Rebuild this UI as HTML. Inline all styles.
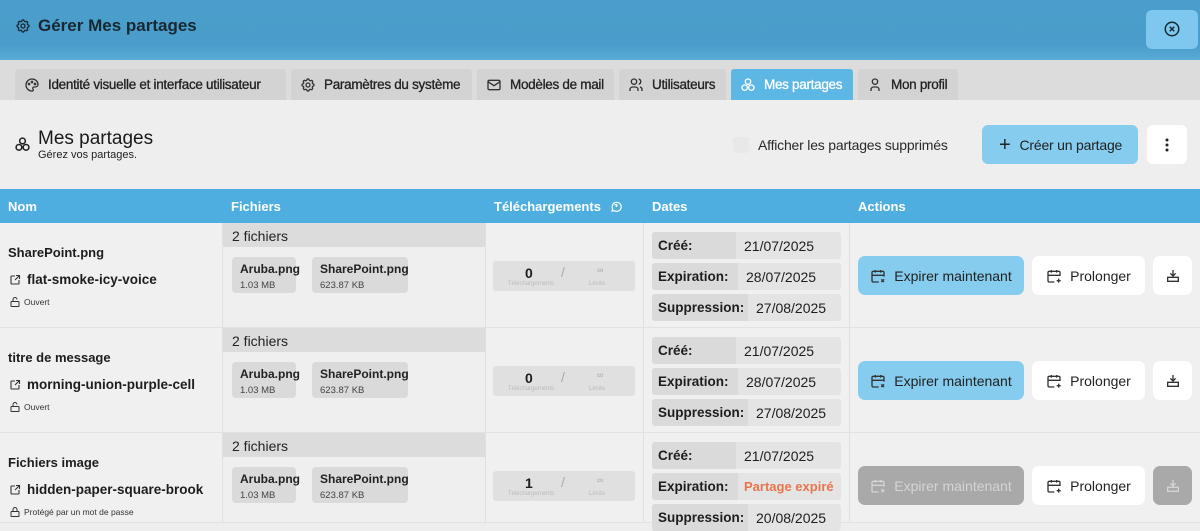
<!DOCTYPE html>
<html><head><meta charset="utf-8"><style>
*{box-sizing:border-box;margin:0;padding:0}
body{width:1200px;height:518px;overflow:hidden;background:#eee;font-family:"Liberation Sans",sans-serif;color:#1d1d1d;position:relative}
.a{position:absolute}
.hdr{left:0;top:0;width:1200px;height:60px;background:linear-gradient(180deg,#4b9ecb 0%,#4a9dca 75%,#5aaad6 100%)}
.tabs{left:0;top:60px;width:1200px;height:40px;background:#dcdcdc}
.tab{top:69px;height:31px;background:#d3d3d3;border-radius:3px 3px 0 0;font-size:13.5px;letter-spacing:-0.3px;color:#222;display:flex;align-items:center;padding-left:9px;gap:8px;white-space:nowrap;-webkit-text-stroke:0.3px #222}
.tab.on{background:#5db7e4;color:#fff;-webkit-text-stroke:0.3px #fff}
svg{display:block;flex-shrink:0}
.th{top:189px;height:34px;background:#4eaee0;width:1200px;left:0}
.th span{position:absolute;top:10px;color:#fff;font-weight:bold;font-size:13px}
.row{left:0;width:1200px;height:105px;background:#f0f0f0;border-bottom:1px solid #e2e2e2}
.vl{position:absolute;top:0;bottom:0;width:1px;background:#e0e0e0}
.fcol{position:absolute;left:223px;width:262px;top:0;bottom:0;background:#efefef}
.fh{position:absolute;left:0;top:0;width:262px;height:24px;background:#dcdcdc;font-size:14px;padding:5px 9px;color:#222}
.card{position:absolute;top:34px;height:36px;background:#dadada;border-radius:4px;padding:5px 8px;white-space:nowrap}
.card b{display:block;font-size:12px;color:#222}
.card i{display:block;font-style:normal;font-size:9.5px;color:#444;margin-top:4px}
.dl{position:absolute;left:493px;top:38px;width:142px;height:30px;background:#e0e0e0;border-radius:3px}
.dr{position:absolute;left:652px;width:189px;height:27px;border-radius:3px;background:#e4e4e4;display:flex;font-size:14px;align-items:center;white-space:nowrap}
.dr b{background:#dadada;height:100%;display:flex;align-items:center;padding-left:6px;border-radius:3px 0 0 3px;font-size:13.5px}
.dr span{padding-left:8px}
.btn{position:absolute;top:33px;height:39px;border-radius:7px;display:flex;align-items:center;justify-content:center;gap:8px;font-size:14px;color:#222}
</style></head><body>
<div class="a hdr"></div>
<svg class="a" style="left:15px;top:18px" width="16" height="16" viewBox="0 0 24 24" fill="none" stroke="#1a2a33" stroke-width="2"><path d="M10.3 4.3c.4-1.8 3-1.8 3.4 0a1.7 1.7 0 0 0 2.6 1.1c1.5-.9 3.3.8 2.4 2.4a1.7 1.7 0 0 0 1 2.5c1.8.4 1.8 3 0 3.4a1.7 1.7 0 0 0-1 2.6c.9 1.5-.9 3.3-2.4 2.4a1.7 1.7 0 0 0-2.6 1c-.4 1.8-3 1.8-3.4 0a1.7 1.7 0 0 0-2.6-1c-1.5.9-3.3-.9-2.4-2.4a1.7 1.7 0 0 0-1-2.6c-1.8-.4-1.8-3 0-3.4a1.7 1.7 0 0 0 1-2.6c-.9-1.5.9-3.3 2.4-2.4 1 .6 2.3.1 2.6-1z"/><circle cx="12" cy="12" r="3"/></svg>
<div class="a" style="left:38px;top:16px;font-size:17px;font-weight:bold;color:#182832">Gérer Mes partages</div>
<div class="a" style="left:1146px;top:10px;width:52px;height:39px;background:#7ec7ee;border-radius:6px"></div>
<svg class="a" style="left:1163px;top:20px" width="18" height="18" viewBox="0 0 24 24" fill="none" stroke="#1a2a33" stroke-width="2"><circle cx="12" cy="12" r="9"/><path d="M9 9l6 6M15 9l-6 6"/></svg>
<div class="a tabs"></div>
<div class="a tab" style="left:15px;width:271px"><svg width="16" height="16" viewBox="0 0 24 24" fill="none" stroke="#333" stroke-width="2"><path d="M12 21a9 9 0 0 1 0-18c5 0 9 3.6 9 8 0 2.5-2 4-4.5 4H15a2 2 0 0 0-1.5 3.3A1.6 1.6 0 0 1 12 21z"/><circle cx="7.5" cy="10.5" r="1"/><circle cx="12" cy="7.5" r="1"/><circle cx="16.5" cy="10.5" r="1"/></svg>Identité visuelle et interface utilisateur</div>
<div class="a tab" style="left:291px;width:181px"><svg width="16" height="16" viewBox="0 0 24 24" fill="none" stroke="#333" stroke-width="2"><circle cx="12" cy="12" r="3"/><path d="M10.3 4.3c.4-1.8 3-1.8 3.4 0a1.7 1.7 0 0 0 2.6 1.1c1.5-.9 3.3.8 2.4 2.4a1.7 1.7 0 0 0 1 2.5c1.8.4 1.8 3 0 3.4a1.7 1.7 0 0 0-1 2.6c.9 1.5-.9 3.3-2.4 2.4a1.7 1.7 0 0 0-2.6 1c-.4 1.8-3 1.8-3.4 0a1.7 1.7 0 0 0-2.6-1c-1.5.9-3.3-.9-2.4-2.4a1.7 1.7 0 0 0-1-2.6c-1.8-.4-1.8-3 0-3.4a1.7 1.7 0 0 0 1-2.6c-.9-1.5.9-3.3 2.4-2.4 1 .6 2.3.1 2.6-1z"/></svg>Paramètres du système</div>
<div class="a tab" style="left:477px;width:137px"><svg width="16" height="16" viewBox="0 0 24 24" fill="none" stroke="#333" stroke-width="2"><rect x="3" y="5" width="18" height="14" rx="2"/><path d="M3 7l9 6 9-6"/></svg>Modèles de mail</div>
<div class="a tab" style="left:619px;width:107px"><svg width="16" height="16" viewBox="0 0 24 24" fill="none" stroke="#333" stroke-width="2"><circle cx="9" cy="7" r="4"/><path d="M3 21v-2a4 4 0 0 1 4-4h4a4 4 0 0 1 4 4v2M16 3.1a4 4 0 0 1 0 7.8M21 21v-2a4 4 0 0 0-3-3.9"/></svg>Utilisateurs</div>
<div class="a tab on" style="left:731px;width:122px"><svg width="16" height="16" viewBox="0 0 24 24" fill="none" stroke="#fff" stroke-width="2"><circle cx="12" cy="7" r="4"/><circle cx="7" cy="16" r="4"/><circle cx="17" cy="16" r="4"/></svg>Mes partages</div>
<div class="a tab" style="left:858px;width:100px"><svg width="16" height="16" viewBox="0 0 24 24" fill="none" stroke="#333" stroke-width="2"><circle cx="12" cy="7" r="4"/><path d="M6 21v-2a4 4 0 0 1 4-4h4a4 4 0 0 1 4 4v2"/></svg>Mon profil</div>

<svg class="a" style="left:14px;top:136px" width="17" height="17" viewBox="0 0 24 24" fill="none" stroke="#222" stroke-width="2.2"><circle cx="12" cy="7" r="4"/><circle cx="7" cy="16" r="4"/><circle cx="17" cy="16" r="4"/></svg>
<div class="a" style="left:38px;top:128px;font-size:19px;color:#1a1a1a">Mes partages</div>
<div class="a" style="left:38px;top:149px;font-size:11px;color:#222">Gérez vos partages.</div>
<div class="a" style="left:733px;top:137px;width:16px;height:16px;background:#e8e8e8;border-radius:3px"></div>
<div class="a" style="left:758px;top:137px;font-size:14px;color:#2a2a2a;letter-spacing:-0.2px">Afficher les partages supprimés</div>
<div class="a" style="left:982px;top:125px;width:156px;height:39px;background:#86ccef;border-radius:6px;font-size:14px;color:#222;display:flex;align-items:center;padding-left:17px;gap:9px;white-space:nowrap;letter-spacing:-0.2px"><span style="font-size:20px;line-height:14px">+</span>Créer un partage</div>
<div class="a" style="left:1147px;top:125px;width:40px;height:39px;background:#fff;border-radius:6px;display:flex;align-items:center;justify-content:center"><svg width="4" height="14" viewBox="0 0 4 14"><circle cx="2" cy="2" r="1.5" fill="#222"/><circle cx="2" cy="7" r="1.5" fill="#222"/><circle cx="2" cy="12" r="1.5" fill="#222"/></svg></div>

<div class="a th"><span style="left:8px">Nom</span><span style="left:231px">Fichiers</span><span style="left:494px">Téléchargements</span>
<svg class="a" style="left:610px;top:12px" width="12" height="12" viewBox="0 0 24 24" fill="none" stroke="#fff" stroke-width="2.4"><path d="M4 20l1.5-4A9 9 0 1 1 9 19.5z"/><path d="M10 9a2 2 0 1 1 3 1.7c-.6.4-1 .8-1 1.3M12 16v.1"/></svg>
<span style="left:652px">Dates</span><span style="left:858px">Actions</span></div>

<div class="a row" style="top:223px">
<div class="vl" style="left:222px"></div><div class="vl" style="left:485px"></div><div class="vl" style="left:643px"></div><div class="vl" style="left:849px"></div>
<div class="a" style="left:8px;top:22px;font-size:13px;font-weight:bold">SharePoint.png</div>
<svg class="a" style="left:9px;top:51px" width="12" height="12" viewBox="0 0 24 24" fill="none" stroke="#333" stroke-width="2.2"><path d="M12 4H5a1 1 0 0 0-1 1v14a1 1 0 0 0 1 1h14a1 1 0 0 0 1-1v-7M14 3h7v7M21 3l-9 9"/></svg>
<div class="a" style="left:27px;top:49px;font-size:13.5px;font-weight:bold">flat-smoke-icy-voice</div>
<svg class="a" style="left:9px;top:73px" width="12" height="12" viewBox="0 0 24 24" fill="none" stroke="#333" stroke-width="2"><rect x="4" y="11" width="16" height="10" rx="1"/><path d="M8 11V7a4 4 0 0 1 8 0"/></svg>
<div class="a" style="left:24px;top:74px;font-size:8.5px;color:#333">Ouvert</div>
<div class="fcol"><div class="fh">2 fichiers</div><div class="card" style="left:9px;width:64px"><b>Aruba.png</b><i>1.03 MB</i></div><div class="card" style="left:89px;width:96px"><b>SharePoint.png</b><i>623.87 KB</i></div></div>
<div class="dl"><div class="a" style="left:32px;top:4px;font-size:14px;font-weight:bold">0</div><div class="a" style="left:68px;top:3px;font-size:14px;color:#aaa">/</div><div class="a" style="left:104px;top:4px;font-size:9px;color:#aaa">∞</div><div class="a" style="left:-2px;width:80px;text-align:center;top:20px;font-size:6px;color:#bbb">Téléchargements</div><div class="a" style="left:96px;top:20px;font-size:6px;color:#bbb">Limite</div></div>
<div class="dr" style="top:9px"><b style="width:84px">Créé:</b><span>21/07/2025</span></div>
<div class="dr" style="top:40px"><b style="width:86px">Expiration:</b><span>28/07/2025</span></div>
<div class="dr" style="top:71px"><b style="width:96px">Suppression:</b><span>27/08/2025</span></div>
<div class="btn" style="left:858px;width:166px;background:#86ccef"><svg width="16" height="16" viewBox="0 0 24 24" fill="none" stroke="#333" stroke-width="2"><path d="M13 21H5a2 2 0 0 1-2-2V7a2 2 0 0 1 2-2h14a2 2 0 0 1 2 2v6M16 3v4M8 3v4M3 11h18M17 17l4 4M21 17l-4 4"/></svg>Expirer maintenant</div>
<div class="btn" style="left:1032px;width:113px;background:#fff"><svg width="16" height="16" viewBox="0 0 24 24" fill="none" stroke="#333" stroke-width="2"><path d="M12.5 21H5a2 2 0 0 1-2-2V7a2 2 0 0 1 2-2h14a2 2 0 0 1 2 2v5M16 3v4M8 3v4M3 11h18M16 19h6M19 16v6"/></svg>Prolonger</div>
<div class="btn" style="left:1153px;width:39px;background:#fff"><svg width="16" height="16" viewBox="0 0 24 24" fill="none" stroke="#333" stroke-width="2"><path d="M12 3v9M8 8l4 4 4-4M4 14h16v6H4zM8 17h.01M12 17h.01"/></svg></div>
</div>

<div class="a row" style="top:328px">
<div class="vl" style="left:222px"></div><div class="vl" style="left:485px"></div><div class="vl" style="left:643px"></div><div class="vl" style="left:849px"></div>
<div class="a" style="left:8px;top:22px;font-size:13px;font-weight:bold">titre de message</div>
<svg class="a" style="left:9px;top:51px" width="12" height="12" viewBox="0 0 24 24" fill="none" stroke="#333" stroke-width="2.2"><path d="M12 4H5a1 1 0 0 0-1 1v14a1 1 0 0 0 1 1h14a1 1 0 0 0 1-1v-7M14 3h7v7M21 3l-9 9"/></svg>
<div class="a" style="left:27px;top:49px;font-size:13.5px;font-weight:bold">morning-union-purple-cell</div>
<svg class="a" style="left:9px;top:73px" width="12" height="12" viewBox="0 0 24 24" fill="none" stroke="#333" stroke-width="2"><rect x="4" y="11" width="16" height="10" rx="1"/><path d="M8 11V7a4 4 0 0 1 8 0"/></svg>
<div class="a" style="left:24px;top:74px;font-size:8.5px;color:#333">Ouvert</div>
<div class="fcol"><div class="fh">2 fichiers</div><div class="card" style="left:9px;width:64px"><b>Aruba.png</b><i>1.03 MB</i></div><div class="card" style="left:89px;width:96px"><b>SharePoint.png</b><i>623.87 KB</i></div></div>
<div class="dl"><div class="a" style="left:32px;top:4px;font-size:14px;font-weight:bold">0</div><div class="a" style="left:68px;top:3px;font-size:14px;color:#aaa">/</div><div class="a" style="left:104px;top:4px;font-size:9px;color:#aaa">∞</div><div class="a" style="left:-2px;width:80px;text-align:center;top:20px;font-size:6px;color:#bbb">Téléchargements</div><div class="a" style="left:96px;top:20px;font-size:6px;color:#bbb">Limite</div></div>
<div class="dr" style="top:9px"><b style="width:84px">Créé:</b><span>21/07/2025</span></div>
<div class="dr" style="top:40px"><b style="width:86px">Expiration:</b><span>28/07/2025</span></div>
<div class="dr" style="top:71px"><b style="width:96px">Suppression:</b><span>27/08/2025</span></div>
<div class="btn" style="left:858px;width:166px;background:#86ccef"><svg width="16" height="16" viewBox="0 0 24 24" fill="none" stroke="#333" stroke-width="2"><path d="M13 21H5a2 2 0 0 1-2-2V7a2 2 0 0 1 2-2h14a2 2 0 0 1 2 2v6M16 3v4M8 3v4M3 11h18M17 17l4 4M21 17l-4 4"/></svg>Expirer maintenant</div>
<div class="btn" style="left:1032px;width:113px;background:#fff"><svg width="16" height="16" viewBox="0 0 24 24" fill="none" stroke="#333" stroke-width="2"><path d="M12.5 21H5a2 2 0 0 1-2-2V7a2 2 0 0 1 2-2h14a2 2 0 0 1 2 2v5M16 3v4M8 3v4M3 11h18M16 19h6M19 16v6"/></svg>Prolonger</div>
<div class="btn" style="left:1153px;width:39px;background:#fff"><svg width="16" height="16" viewBox="0 0 24 24" fill="none" stroke="#333" stroke-width="2"><path d="M12 3v9M8 8l4 4 4-4M4 14h16v6H4zM8 17h.01M12 17h.01"/></svg></div>
</div>

<div class="a row" style="top:433px;height:90px">
<div class="vl" style="left:222px"></div><div class="vl" style="left:485px"></div><div class="vl" style="left:643px"></div><div class="vl" style="left:849px"></div>
<div class="a" style="left:8px;top:22px;font-size:13px;font-weight:bold">Fichiers image</div>
<svg class="a" style="left:9px;top:51px" width="12" height="12" viewBox="0 0 24 24" fill="none" stroke="#333" stroke-width="2.2"><path d="M12 4H5a1 1 0 0 0-1 1v14a1 1 0 0 0 1 1h14a1 1 0 0 0 1-1v-7M14 3h7v7M21 3l-9 9"/></svg>
<div class="a" style="left:27px;top:49px;font-size:13.5px;font-weight:bold">hidden-paper-square-brook</div>
<svg class="a" style="left:9px;top:73px" width="12" height="12" viewBox="0 0 24 24" fill="none" stroke="#333" stroke-width="2"><rect x="4" y="11" width="16" height="10" rx="1"/><path d="M8 11V7a4 4 0 0 1 8 0v4"/></svg>
<div class="a" style="left:24px;top:74px;font-size:8.5px;color:#333">Protégé par un mot de passe</div>
<div class="fcol"><div class="fh">2 fichiers</div><div class="card" style="left:9px;width:64px"><b>Aruba.png</b><i>1.03 MB</i></div><div class="card" style="left:89px;width:96px"><b>SharePoint.png</b><i>623.87 KB</i></div></div>
<div class="dl"><div class="a" style="left:32px;top:4px;font-size:14px;font-weight:bold">1</div><div class="a" style="left:68px;top:3px;font-size:14px;color:#aaa">/</div><div class="a" style="left:104px;top:4px;font-size:9px;color:#aaa">∞</div><div class="a" style="left:-2px;width:80px;text-align:center;top:20px;font-size:6px;color:#bbb">Téléchargements</div><div class="a" style="left:96px;top:20px;font-size:6px;color:#bbb">Limite</div></div>
<div class="dr" style="top:9px"><b style="width:84px">Créé:</b><span>21/07/2025</span></div>
<div class="dr" style="top:40px"><b style="width:86px">Expiration:</b><span style="color:#e8744e;font-weight:bold;font-size:13px;padding-left:6px">Partage expiré</span></div>
<div class="dr" style="top:71px"><b style="width:96px">Suppression:</b><span>20/08/2025</span></div>
<div class="btn" style="left:858px;width:166px;background:#a9a9a9;color:#d4d4d4"><svg width="16" height="16" viewBox="0 0 24 24" fill="none" stroke="#d4d4d4" stroke-width="2"><path d="M13 21H5a2 2 0 0 1-2-2V7a2 2 0 0 1 2-2h14a2 2 0 0 1 2 2v6M16 3v4M8 3v4M3 11h18M17 17l4 4M21 17l-4 4"/></svg>Expirer maintenant</div>
<div class="btn" style="left:1032px;width:113px;background:#fff"><svg width="16" height="16" viewBox="0 0 24 24" fill="none" stroke="#333" stroke-width="2"><path d="M12.5 21H5a2 2 0 0 1-2-2V7a2 2 0 0 1 2-2h14a2 2 0 0 1 2 2v5M16 3v4M8 3v4M3 11h18M16 19h6M19 16v6"/></svg>Prolonger</div>
<div class="btn" style="left:1153px;width:39px;background:#a9a9a9"><svg width="16" height="16" viewBox="0 0 24 24" fill="none" stroke="#d4d4d4" stroke-width="2"><path d="M12 3v9M8 8l4 4 4-4M4 14h16v6H4zM8 17h.01M12 17h.01"/></svg></div>
</div>
</body></html>
